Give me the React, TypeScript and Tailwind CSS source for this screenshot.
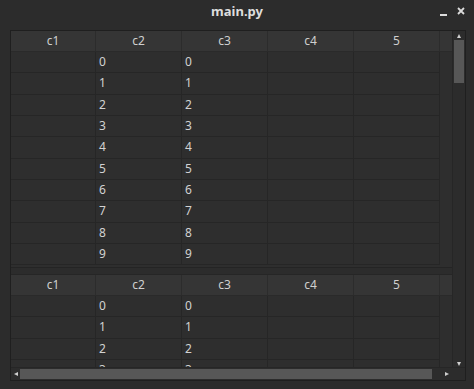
import React from "react";

const cols = ["c1", "c2", "c3", "c4", "5"];
const widths = ["w-[85px]", "w-[86px]", "w-[86px]", "w-[86px]", "w-[86px]"];

function Header() {
  return (
    <div className="flex h-[21px] shrink-0 bg-[#353535] border-b border-[#2a2a2a]">
      {cols.map((c, i) => (
        <div
          key={c}
          className={`${widths[i]} shrink-0 border-r border-[#2c2c2c] flex items-center justify-center text-[12px] text-[#cfcfcf]`}
        >
          {c}
        </div>
      ))}
      <div className="flex-1" />
    </div>
  );
}

function Rows({ n }: { n: number }) {
  const rows = Array.from({ length: n }, (_, i) => i);
  return (
    <>
      {rows.map((r) => (
        <div key={r} className="flex h-[21.33px] shrink-0">
          {cols.map((c, i) => (
            <div
              key={c}
              className={`${widths[i]} shrink-0 border-r border-b border-[#262626] flex items-center pl-[3px] text-[12px] text-[#d2d2d2]`}
            >
              {i === 1 || i === 2 ? String(r) : ""}
            </div>
          ))}
          <div className="flex-1" />
        </div>
      ))}
    </>
  );
}

function Arrow({ dir }: { dir: "up" | "down" | "left" | "right" }) {
  const pts: Record<string, string> = {
    up: "2,0 4,4 0,4",
    down: "0,0 4,0 2,4",
    left: "4,0 4,4 0,2",
    right: "0,0 4,2 0,4",
  };
  return (
    <svg width="4" height="4" viewBox="0 0 4 4" className="block">
      <polygon points={pts[dir]} fill="#cfcfcf" />
    </svg>
  );
}

export default function App() {
  return (
    <div
      className="w-[474px] h-[389px] bg-[#2c2c2c] flex flex-col overflow-hidden"
      style={{ fontFamily: '"Noto Sans", "DejaVu Sans", sans-serif' }}
    >
      {/* title bar */}
      <div className="relative h-[30px] shrink-0 flex items-start justify-center">
        <span className="mt-[2px] text-[13px] font-bold text-[#dedede]">main.py</span>
        <div className="absolute right-[9px] top-[5px] flex items-center gap-[10px]">
          <svg width="7" height="12" viewBox="0 0 7 12">
            <rect x="0" y="9" width="7" height="2" fill="#dcdcdc" />
          </svg>
          <svg width="8" height="12" viewBox="0 0 8 12">
            <path d="M1 3 L7 9 M7 3 L1 9" stroke="#dcdcdc" strokeWidth="1.8" />
          </svg>
        </div>
      </div>

      {/* scroll area */}
      <div className="mx-[10px] w-[456px] h-[351px] border border-[#1f1f1f] flex flex-col">
        <div className="flex flex-1 min-h-0">
          {/* viewport */}
          <div className="flex-1 min-w-0 overflow-hidden flex flex-col bg-[#2e2e2e]">
            <div className="h-[237px] shrink-0 flex flex-col border-b border-[#242424] overflow-hidden">
              <Header />
              <Rows n={10} />
            </div>
            <div className="h-[7px] shrink-0 bg-[#2c2c2c] border-b border-[#262626]" />
            <div className="flex-1 min-h-0 flex flex-col overflow-hidden">
              <Header />
              <Rows n={4} />
            </div>
          </div>
          {/* vertical scrollbar */}
          <div className="w-[13px] shrink-0 bg-[#2c2c2c] border-l border-[#262626] flex flex-col items-center pt-[3px]">
            <Arrow dir="up" />
            <div className="mt-[2px] w-[10px] h-[43px] bg-[#575757]" />
            <div className="flex-1" />
            <div className="mb-[1px]">
              <Arrow dir="down" />
            </div>
          </div>
        </div>
        {/* horizontal scrollbar */}
        <div className="h-[13px] shrink-0 flex border-t border-[#262626] bg-[#2c2c2c]">
          <div className="flex-1 flex items-center pl-[3px]">
            <Arrow dir="left" />
            <div className="ml-[2px] w-[412px] h-[10px] bg-[#575757]" />
            <div className="flex-1" />
            <div className="mr-[3px]">
              <Arrow dir="right" />
            </div>
          </div>
          <div className="w-[13px] shrink-0" />
        </div>
      </div>
    </div>
  );
}
